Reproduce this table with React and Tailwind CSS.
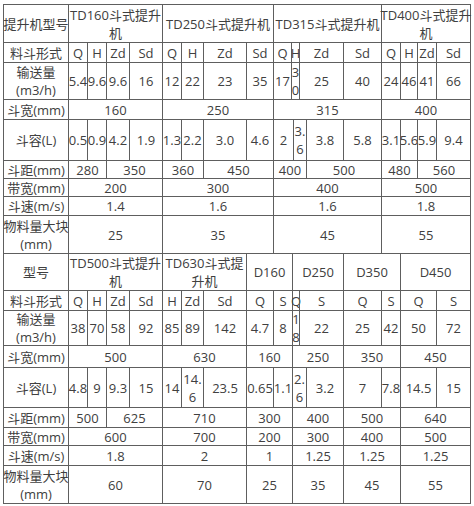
import React from "react";

// each row: h = height class, cells = [widthClass, content]
const rows = [
  { h: "h-[38px]", label: "提升机型号", cells: [
    ["w-[94px]", "TD160斗式提升\n机"], ["w-[111px]", "TD250斗式提升机"], ["w-[108px]", "TD315斗式提升机"], ["w-[89px]", "TD400斗式提升\n机"],
  ]},
  { h: "h-[20px]", label: "料斗形式", cells: [
    ["w-[19px]", "Q"], ["w-[19px]", "H"], ["w-[23px]", "Zd"], ["w-[33px]", "Sd"],
    ["w-[19px]", "Q"], ["w-[22px]", "H"], ["w-[43px]", "Zd"], ["w-[27px]", "Sd"],
    ["w-[18px]", "Q"], ["w-[8px]", "H"], ["w-[44px]", "Zd"], ["w-[38px]", "Sd"],
    ["w-[19px]", "Q"], ["w-[17px]", "H"], ["w-[19px]", "Zd"], ["w-[34px]", "Sd"],
  ]},
  { h: "h-[37px]", label: "输送量\n(m3/h)", cells: [
    ["w-[19px]", "5.4"], ["w-[19px]", "9.6"], ["w-[23px]", "9.6"], ["w-[33px]", "16"],
    ["w-[19px]", "12"], ["w-[22px]", "22"], ["w-[43px]", "23"], ["w-[27px]", "35"],
    ["w-[18px]", "17"], ["w-[8px]", "3\n0"], ["w-[44px]", "25"], ["w-[38px]", "40"],
    ["w-[19px]", "24"], ["w-[17px]", "46"], ["w-[19px]", "41"], ["w-[34px]", "66"],
  ]},
  { h: "h-[20px]", label: "斗宽(mm)", cells: [
    ["w-[94px]", "160"], ["w-[111px]", "250"], ["w-[108px]", "315"], ["w-[89px]", "400"],
  ]},
  { h: "h-[41px]", label: "斗容(L)", cells: [
    ["w-[19px]", "0.5"], ["w-[19px]", "0.9"], ["w-[23px]", "4.2"], ["w-[33px]", "1.9"],
    ["w-[19px]", "1.3"], ["w-[22px]", "2.2"], ["w-[43px]", "3.0"], ["w-[27px]", "4.6"],
    ["w-[20px]", "2"], ["w-[13px]", "3.\n6"], ["w-[37px]", "3.8"], ["w-[38px]", "5.8"],
    ["w-[19px]", "3.1"], ["w-[17px]", "5.6"], ["w-[19px]", "5.9"], ["w-[34px]", "9.4"],
  ]},
  { h: "h-[18px]", label: "斗距(mm)", cells: [
    ["w-[38px]", "280"], ["w-[56px]", "350"], ["w-[41px]", "360"], ["w-[70px]", "450"],
    ["w-[33px]", "400"], ["w-[75px]", "500"], ["w-[36px]", "480"], ["w-[53px]", "560"],
  ]},
  { h: "h-[18px]", label: "带宽(mm)", cells: [
    ["w-[94px]", "200"], ["w-[111px]", "300"], ["w-[108px]", "400"], ["w-[89px]", "500"],
  ]},
  { h: "h-[19px]", label: "斗速(m/s)", cells: [
    ["w-[94px]", "1.4"], ["w-[111px]", "1.6"], ["w-[108px]", "1.6"], ["w-[89px]", "1.8"],
  ]},
  { h: "h-[38px]", label: "物料量大块\n(mm)", cells: [
    ["w-[94px]", "25"], ["w-[111px]", "35"], ["w-[108px]", "45"], ["w-[89px]", "55"],
  ]},
  { h: "h-[37px]", label: "型号", cells: [
    ["w-[94px]", "TD500斗式提升\n机"], ["w-[84px]", "TD630斗式提\n升机"], ["w-[46px]", "D160"],
    ["w-[51px]", "D250"], ["w-[57px]", "D350"], ["w-[70px]", "D450"],
  ]},
  { h: "h-[20px]", label: "料斗形式", cells: [
    ["w-[19px]", "Q"], ["w-[19px]", "H"], ["w-[23px]", "Zd"], ["w-[33px]", "Sd"],
    ["w-[19px]", "H"], ["w-[22px]", "Zd"], ["w-[43px]", "Sd"],
    ["w-[27px]", "Q"], ["w-[19px]", "S"], ["w-[7px]", "Q"], ["w-[44px]", "S"],
    ["w-[38px]", "Q"], ["w-[19px]", "S"], ["w-[36px]", "Q"], ["w-[34px]", "S"],
  ]},
  { h: "h-[35px]", label: "输送量\n(m3/h)", cells: [
    ["w-[19px]", "38"], ["w-[19px]", "70"], ["w-[23px]", "58"], ["w-[33px]", "92"],
    ["w-[19px]", "85"], ["w-[22px]", "89"], ["w-[43px]", "142"],
    ["w-[27px]", "4.7"], ["w-[19px]", "8"], ["w-[7px]", "1\n8"], ["w-[44px]", "22"],
    ["w-[38px]", "25"], ["w-[19px]", "42"], ["w-[36px]", "50"], ["w-[34px]", "72"],
  ]},
  { h: "h-[22px]", label: "斗宽(mm)", cells: [
    ["w-[94px]", "500"], ["w-[84px]", "630"], ["w-[46px]", "160"],
    ["w-[51px]", "250"], ["w-[57px]", "350"], ["w-[70px]", "450"],
  ]},
  { h: "h-[40px]", label: "斗容(L)", cells: [
    ["w-[19px]", "4.8"], ["w-[19px]", "9"], ["w-[23px]", "9.3"], ["w-[33px]", "15"],
    ["w-[19px]", "14"], ["w-[22px]", "14.\n6"], ["w-[43px]", "23.5"],
    ["w-[27px]", "0.65"], ["w-[19px]", "1.1"], ["w-[14px]", "2.\n6"], ["w-[37px]", "3.2"],
    ["w-[38px]", "7"], ["w-[19px]", "7.8"], ["w-[36px]", "14.5"], ["w-[34px]", "15"],
  ]},
  { h: "h-[20px]", label: "斗距(mm)", cells: [
    ["w-[38px]", "500"], ["w-[56px]", "625"], ["w-[84px]", "710"], ["w-[46px]", "300"],
    ["w-[51px]", "400"], ["w-[57px]", "500"], ["w-[70px]", "640"],
  ]},
  { h: "h-[18px]", label: "带宽(mm)", cells: [
    ["w-[94px]", "600"], ["w-[84px]", "700"], ["w-[46px]", "200"],
    ["w-[51px]", "300"], ["w-[57px]", "400"], ["w-[70px]", "500"],
  ]},
  { h: "h-[20px]", label: "斗速(m/s)", cells: [
    ["w-[94px]", "1.8"], ["w-[84px]", "2"], ["w-[46px]", "1"],
    ["w-[51px]", "1.25"], ["w-[57px]", "1.25"], ["w-[70px]", "1.25"],
  ]},
  { h: "h-[37px]", label: "物料量大块\n(mm)", cells: [
    ["w-[94px]", "60"], ["w-[84px]", "70"], ["w-[46px]", "25"],
    ["w-[51px]", "35"], ["w-[57px]", "45"], ["w-[70px]", "55"],
  ]},
];

function Text({ s }) {
  const parts = s.split("\n");
  return (
    <span className="whitespace-nowrap">
      {parts.map((p, i) => (
        <React.Fragment key={i}>
          {i > 0 && <br />}
          {p}
        </React.Fragment>
      ))}
    </span>
  );
}

export default function App() {
  return (
    <div className="w-[474px] h-[506px] bg-white pt-[4px] pl-[3px]">
      <div
        className="w-[468px] border border-[#5e5e5e] text-[13px] leading-[18px] text-[#404040]"
        style={{ fontFamily: '"Open Sans", "Noto Sans CJK SC", sans-serif' }}
      >
        {rows.map((r, ri) => (
          <div
            key={ri}
            className={`flex ${r.h} ${ri < rows.length - 1 ? "border-b border-[#5e5e5e]" : ""}`}
          >
            <div className="w-[64px] shrink-0 flex items-center justify-center text-center">
              <Text s={r.label} />
            </div>
            {r.cells.map(([w, c], ci) => (
              <div
                key={ci}
                className={`${w} shrink-0 border-l border-[#5e5e5e] flex items-center justify-center text-center overflow-visible`}
              >
                <Text s={c} />
              </div>
            ))}
          </div>
        ))}
      </div>
    </div>
  );
}
